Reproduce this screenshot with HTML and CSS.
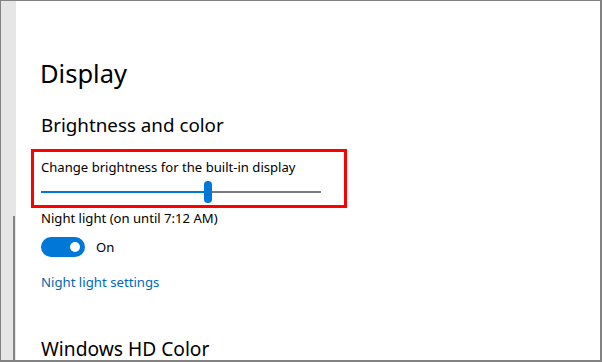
FILE: index.html
```html
<!DOCTYPE html>
<html lang="en">
<head>
    <meta charset="UTF-8">
    <title>Display</title>
    <link rel="stylesheet" href="styles.css">
</head>
<body>
    <div class="window">
        <div class="rail">
            <div class="rail-thumb"></div>
        </div>

        <main class="page">
            <h1 class="page-title">Display</h1>
            <h2 class="section-title">Brightness and color</h2>

            <div class="highlight">
                <div class="label">Change brightness for the built-in display</div>
                <div class="slider">
                    <div class="slider-fill" style="width: 163px"></div>
                    <div class="slider-thumb"></div>
                    <div class="slider-rest"></div>
                </div>
            </div>

            <div class="label">Night light (on until 7:12 AM)</div>
            <div class="toggle-row">
                <span class="toggle"><span class="toggle-knob"></span></span>
                <span class="toggle-text">On</span>
            </div>

            <a class="link" href="#">Night light settings</a>

            <h2 class="section-title hd-title">Windows HD Color</h2>
        </main>
    </div>
</body>
</html>
```

FILE: styles.css
```css
:root {
    --accent-color: #0078d7;
    --link-color: #0067b8;
    --frame-color: #828282;
    --rail-color: #e6e6e6;
    --track-color: #7a7a7a;
    --text-color: #000000;
}

body {
    margin: 0;
    font-family: "Segoe UI", "Noto Sans", sans-serif;
    color: var(--text-color);
    background: #ffffff;
}

.window {
    width: 602px;
    height: 362px;
    box-sizing: border-box;
    border-style: solid;
    border-color: var(--frame-color);
    border-width: 1px 2px 2px 1px;
    display: flex;
    overflow: hidden;
    background: #ffffff;
}

.rail {
    width: 15px;
    flex-shrink: 0;
    background-color: var(--rail-color);
    display: flex;
    flex-direction: column;
    justify-content: flex-end;
}

.rail-thumb {
    width: 2px;
    height: 144px;
    margin-left: 12px;
    background-color: #858585;
}

.page {
    flex: 1;
    padding: 54px 0 0 25px;
}

.page-title {
    margin: 0 0 0 -1px;
    font-size: 25.5px;
    font-weight: 400;
    line-height: 36px;
}

.section-title {
    margin: 20px 0 0;
    font-size: 18.8px;
    font-weight: 400;
    line-height: 28px;
}

.highlight {
    width: 316px;
    box-sizing: border-box;
    margin: 10px 0 0 -10px;
    padding: 5px 0 2px 7px;
    border: 3px solid #ff0000;
}

.label {
    font-size: 13.1px;
    line-height: 20px;
}

.slider {
    display: flex;
    align-items: center;
    width: 280px;
    height: 22px;
    margin-top: 4px;
}

.slider-fill {
    height: 2px;
    background-color: var(--accent-color);
}

.slider-thumb {
    width: 8px;
    height: 22px;
    border-radius: 4px;
    background-color: var(--accent-color);
}

.slider-rest {
    flex: 1;
    height: 2px;
    background-color: var(--track-color);
}

.toggle-row {
    display: flex;
    align-items: center;
    gap: 11px;
    margin-top: 9px;
}

.toggle {
    width: 44px;
    height: 20px;
    box-sizing: border-box;
    padding-right: 5px;
    border-radius: 10px;
    background-color: var(--accent-color);
    display: flex;
    align-items: center;
    justify-content: flex-end;
}

.toggle-knob {
    width: 10px;
    height: 10px;
    border-radius: 50%;
    background-color: #ffffff;
}

.toggle-text {
    font-size: 13.1px;
    line-height: 20px;
}

.link {
    display: block;
    margin-top: 15px;
    font-size: 13.2px;
    line-height: 20px;
    color: var(--link-color);
    text-decoration: none;
}

.hd-title {
    margin-top: 43px;
    font-size: 19.2px;
}
```
